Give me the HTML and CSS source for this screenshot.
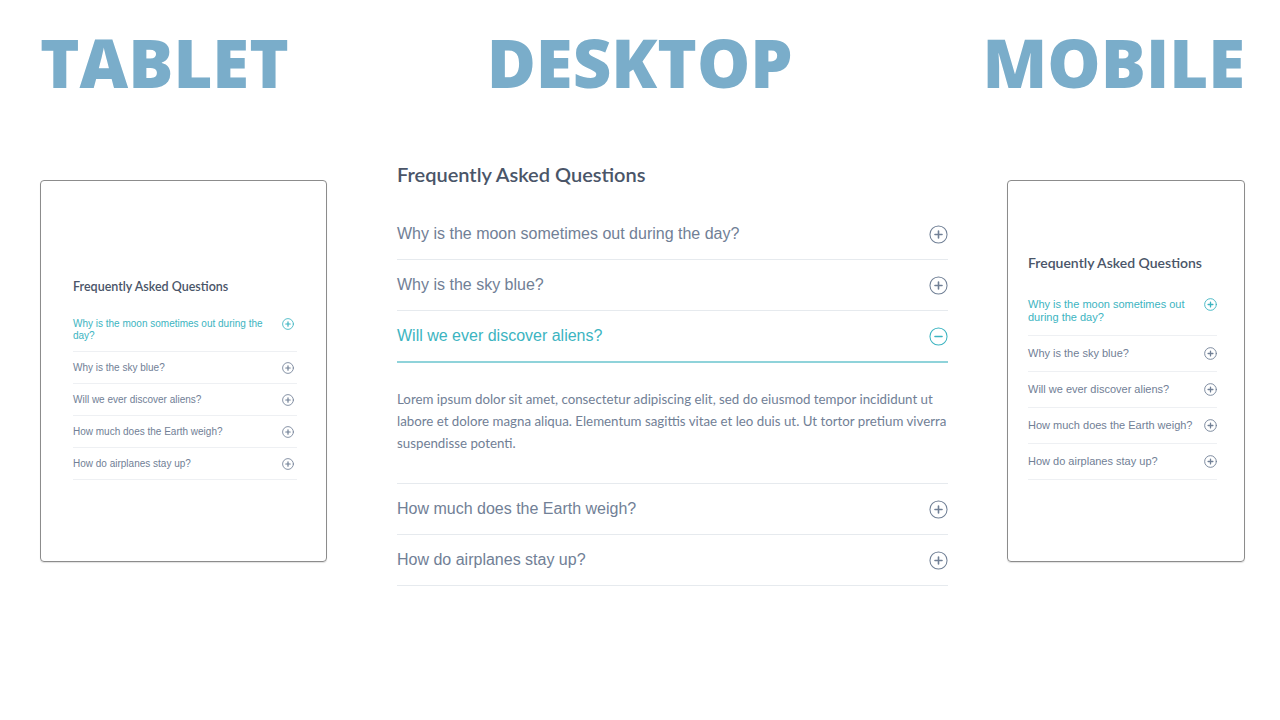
FILE: index.html
```html
<!DOCTYPE html>
<html lang="en">
<head>
<meta charset="utf-8">
<title>FAQ responsive</title>
<link rel="stylesheet" href="styles.css">
</head>
<body>
<div class="titles">
  <h1 class="title">TABLET</h1>
  <h1 class="title">DESKTOP</h1>
  <h1 class="title">MOBILE</h1>
</div>
<div class="columns">
  <div class="device tablet">
    <h2 class="faq-title">Frequently Asked Questions</h2>
    <ul class="faq">
      <li class="item active"><span class="q">Why is the moon sometimes out during the day?</span><svg class="ic" viewBox="0 0 20 20"><circle cx="10" cy="10" r="9"/><path class="cross" d="M10 6.3v7.4M6.3 10h7.4"/></svg></li>
      <li class="item"><span class="q">Why is the sky blue?</span><svg class="ic" viewBox="0 0 20 20"><circle cx="10" cy="10" r="9"/><path class="cross" d="M10 6.3v7.4M6.3 10h7.4"/></svg></li>
      <li class="item"><span class="q">Will we ever discover aliens?</span><svg class="ic" viewBox="0 0 20 20"><circle cx="10" cy="10" r="9"/><path class="cross" d="M10 6.3v7.4M6.3 10h7.4"/></svg></li>
      <li class="item"><span class="q">How much does the Earth weigh?</span><svg class="ic" viewBox="0 0 20 20"><circle cx="10" cy="10" r="9"/><path class="cross" d="M10 6.3v7.4M6.3 10h7.4"/></svg></li>
      <li class="item"><span class="q">How do airplanes stay up?</span><svg class="ic" viewBox="0 0 20 20"><circle cx="10" cy="10" r="9"/><path class="cross" d="M10 6.3v7.4M6.3 10h7.4"/></svg></li>
    </ul>
  </div>

  <section class="desktop">
    <h2 class="faq-title">Frequently Asked Questions</h2>
    <ul class="faq">
      <li class="item"><span class="q">Why is the moon sometimes out during the day?</span><svg class="ic" viewBox="0 0 20 20"><circle cx="10" cy="10" r="9"/><path class="cross" d="M10 6.3v7.4M6.3 10h7.4"/></svg></li>
      <li class="item"><span class="q">Why is the sky blue?</span><svg class="ic" viewBox="0 0 20 20"><circle cx="10" cy="10" r="9"/><path class="cross" d="M10 6.3v7.4M6.3 10h7.4"/></svg></li>
      <li class="item active open"><span class="q">Will we ever discover aliens?</span><svg class="ic" viewBox="0 0 20 20"><circle cx="10" cy="10" r="9"/><path class="cross" d="M6.3 10h7.4"/></svg></li>
      <li class="answer"><p>Lorem ipsum dolor sit amet, consectetur adipiscing elit, sed do eiusmod tempor incididunt ut<br>labore et dolore magna aliqua. Elementum sagittis vitae et leo duis ut. Ut tortor pretium viverra<br>suspendisse potenti.</p></li>
      <li class="item"><span class="q">How much does the Earth weigh?</span><svg class="ic" viewBox="0 0 20 20"><circle cx="10" cy="10" r="9"/><path class="cross" d="M10 6.3v7.4M6.3 10h7.4"/></svg></li>
      <li class="item"><span class="q">How do airplanes stay up?</span><svg class="ic" viewBox="0 0 20 20"><circle cx="10" cy="10" r="9"/><path class="cross" d="M10 6.3v7.4M6.3 10h7.4"/></svg></li>
    </ul>
  </section>

  <div class="device mobile">
    <h2 class="faq-title">Frequently Asked Questions</h2>
    <ul class="faq">
      <li class="item active"><span class="q">Why is the moon sometimes out during the day?</span><svg class="ic" viewBox="0 0 20 20"><circle cx="10" cy="10" r="9"/><path class="cross" d="M10 6.3v7.4M6.3 10h7.4"/></svg></li>
      <li class="item"><span class="q">Why is the sky blue?</span><svg class="ic" viewBox="0 0 20 20"><circle cx="10" cy="10" r="9"/><path class="cross" d="M10 6.3v7.4M6.3 10h7.4"/></svg></li>
      <li class="item"><span class="q">Will we ever discover aliens?</span><svg class="ic" viewBox="0 0 20 20"><circle cx="10" cy="10" r="9"/><path class="cross" d="M10 6.3v7.4M6.3 10h7.4"/></svg></li>
      <li class="item"><span class="q">How much does the Earth weigh?</span><svg class="ic" viewBox="0 0 20 20"><circle cx="10" cy="10" r="9"/><path class="cross" d="M10 6.3v7.4M6.3 10h7.4"/></svg></li>
      <li class="item"><span class="q">How do airplanes stay up?</span><svg class="ic" viewBox="0 0 20 20"><circle cx="10" cy="10" r="9"/><path class="cross" d="M10 6.3v7.4M6.3 10h7.4"/></svg></li>
    </ul>
  </div>
</div>
</body>
</html>
```

FILE: styles.css
```css
* { box-sizing: border-box; }
html, body { margin: 0; padding: 0; background: #ffffff; }
body { width: 1280px; height: 720px; overflow: hidden; font-family: "Liberation Sans", Arial, sans-serif; }

.titles {
  display: flex;
  justify-content: space-between;
  padding: 29px 35px 0 40px;
}
.title {
  margin: 0;
  font-family: "Open Sans", sans-serif;
  font-weight: 800;
  font-size: 67px;
  line-height: 66px;
  color: #7aadca;
}
.title:nth-child(2) { margin-left: 8px; }

.columns {
  display: flex;
  align-items: flex-start;
  padding: 0 35px 0 40px;
  margin-top: 67px;
}

.faq { list-style: none; margin: 0; padding: 0; }
.faq-title {
  margin: 0;
  font-family: "Lato", sans-serif;
  font-weight: 600;
  color: #4a5568;
}
.item {
  display: flex;
  justify-content: space-between;
  color: #718096;
}
.item.active { color: #3cb4c1; }
.q { flex: 1; }
.ic { flex: none; fill: none; stroke: currentColor; stroke-width: 1.1; stroke-linecap: round; }
.ic .cross { stroke-width: 1.7; }

/* devices */
.device {
  flex: none;
  margin-top: 18px;
  height: 382px;
  border: 1px solid #8c8c8c;
  border-radius: 4px;
  box-shadow: 0 1px 1px rgba(0,0,0,0.12);
}
.tablet { width: 287px; padding: 98px 29px 0 32px; }
.tablet .faq-title { font-size: 12.5px; line-height: 15px; margin-bottom: 14px; }
.tablet .item { align-items: flex-start; font-size: 10px; line-height: 12px; padding: 10px 0 9px; border-bottom: 1px solid #eef0f3; }
.tablet .q { padding-right: 10px; }
.tablet .ic { width: 12px; height: 12px; margin-right: 3px; stroke-width: 1.4; }
.tablet .ic .cross, .mobile .ic .cross { stroke-width: 2; }

.mobile { width: 238px; margin-left: auto; padding: 73px 27px 0 20px; }
.mobile .faq-title { font-size: 14px; line-height: 17px; margin-bottom: 16px; }
.mobile .item { align-items: flex-start; font-size: 11px; line-height: 13px; padding: 11px 0; border-bottom: 1px solid #eef0f3; }
.mobile .q { padding-right: 4px; }
.mobile .ic { width: 13px; height: 13px; stroke-width: 1.4; }

/* desktop */
.desktop { flex: none; width: 551px; margin-left: 70px; }
.desktop .faq-title { font-size: 20px; line-height: 24px; margin-bottom: 23px; }
.desktop .item { align-items: center; height: 51px; font-size: 16px; border-bottom: 1px solid #e6eaee; }
.desktop .item.open { height: 52px; border-bottom: 2px solid #8fd3da; }
.desktop .ic { width: 19px; height: 19px; }
.answer { padding: 25px 0 29px; border-bottom: 1px solid #e6eaee; }
.answer p {
  margin: 0;
  font-family: "Lato", sans-serif;
  font-size: 13.3px;
  line-height: 22px;
  color: #718096;
  white-space: nowrap;
}
```
